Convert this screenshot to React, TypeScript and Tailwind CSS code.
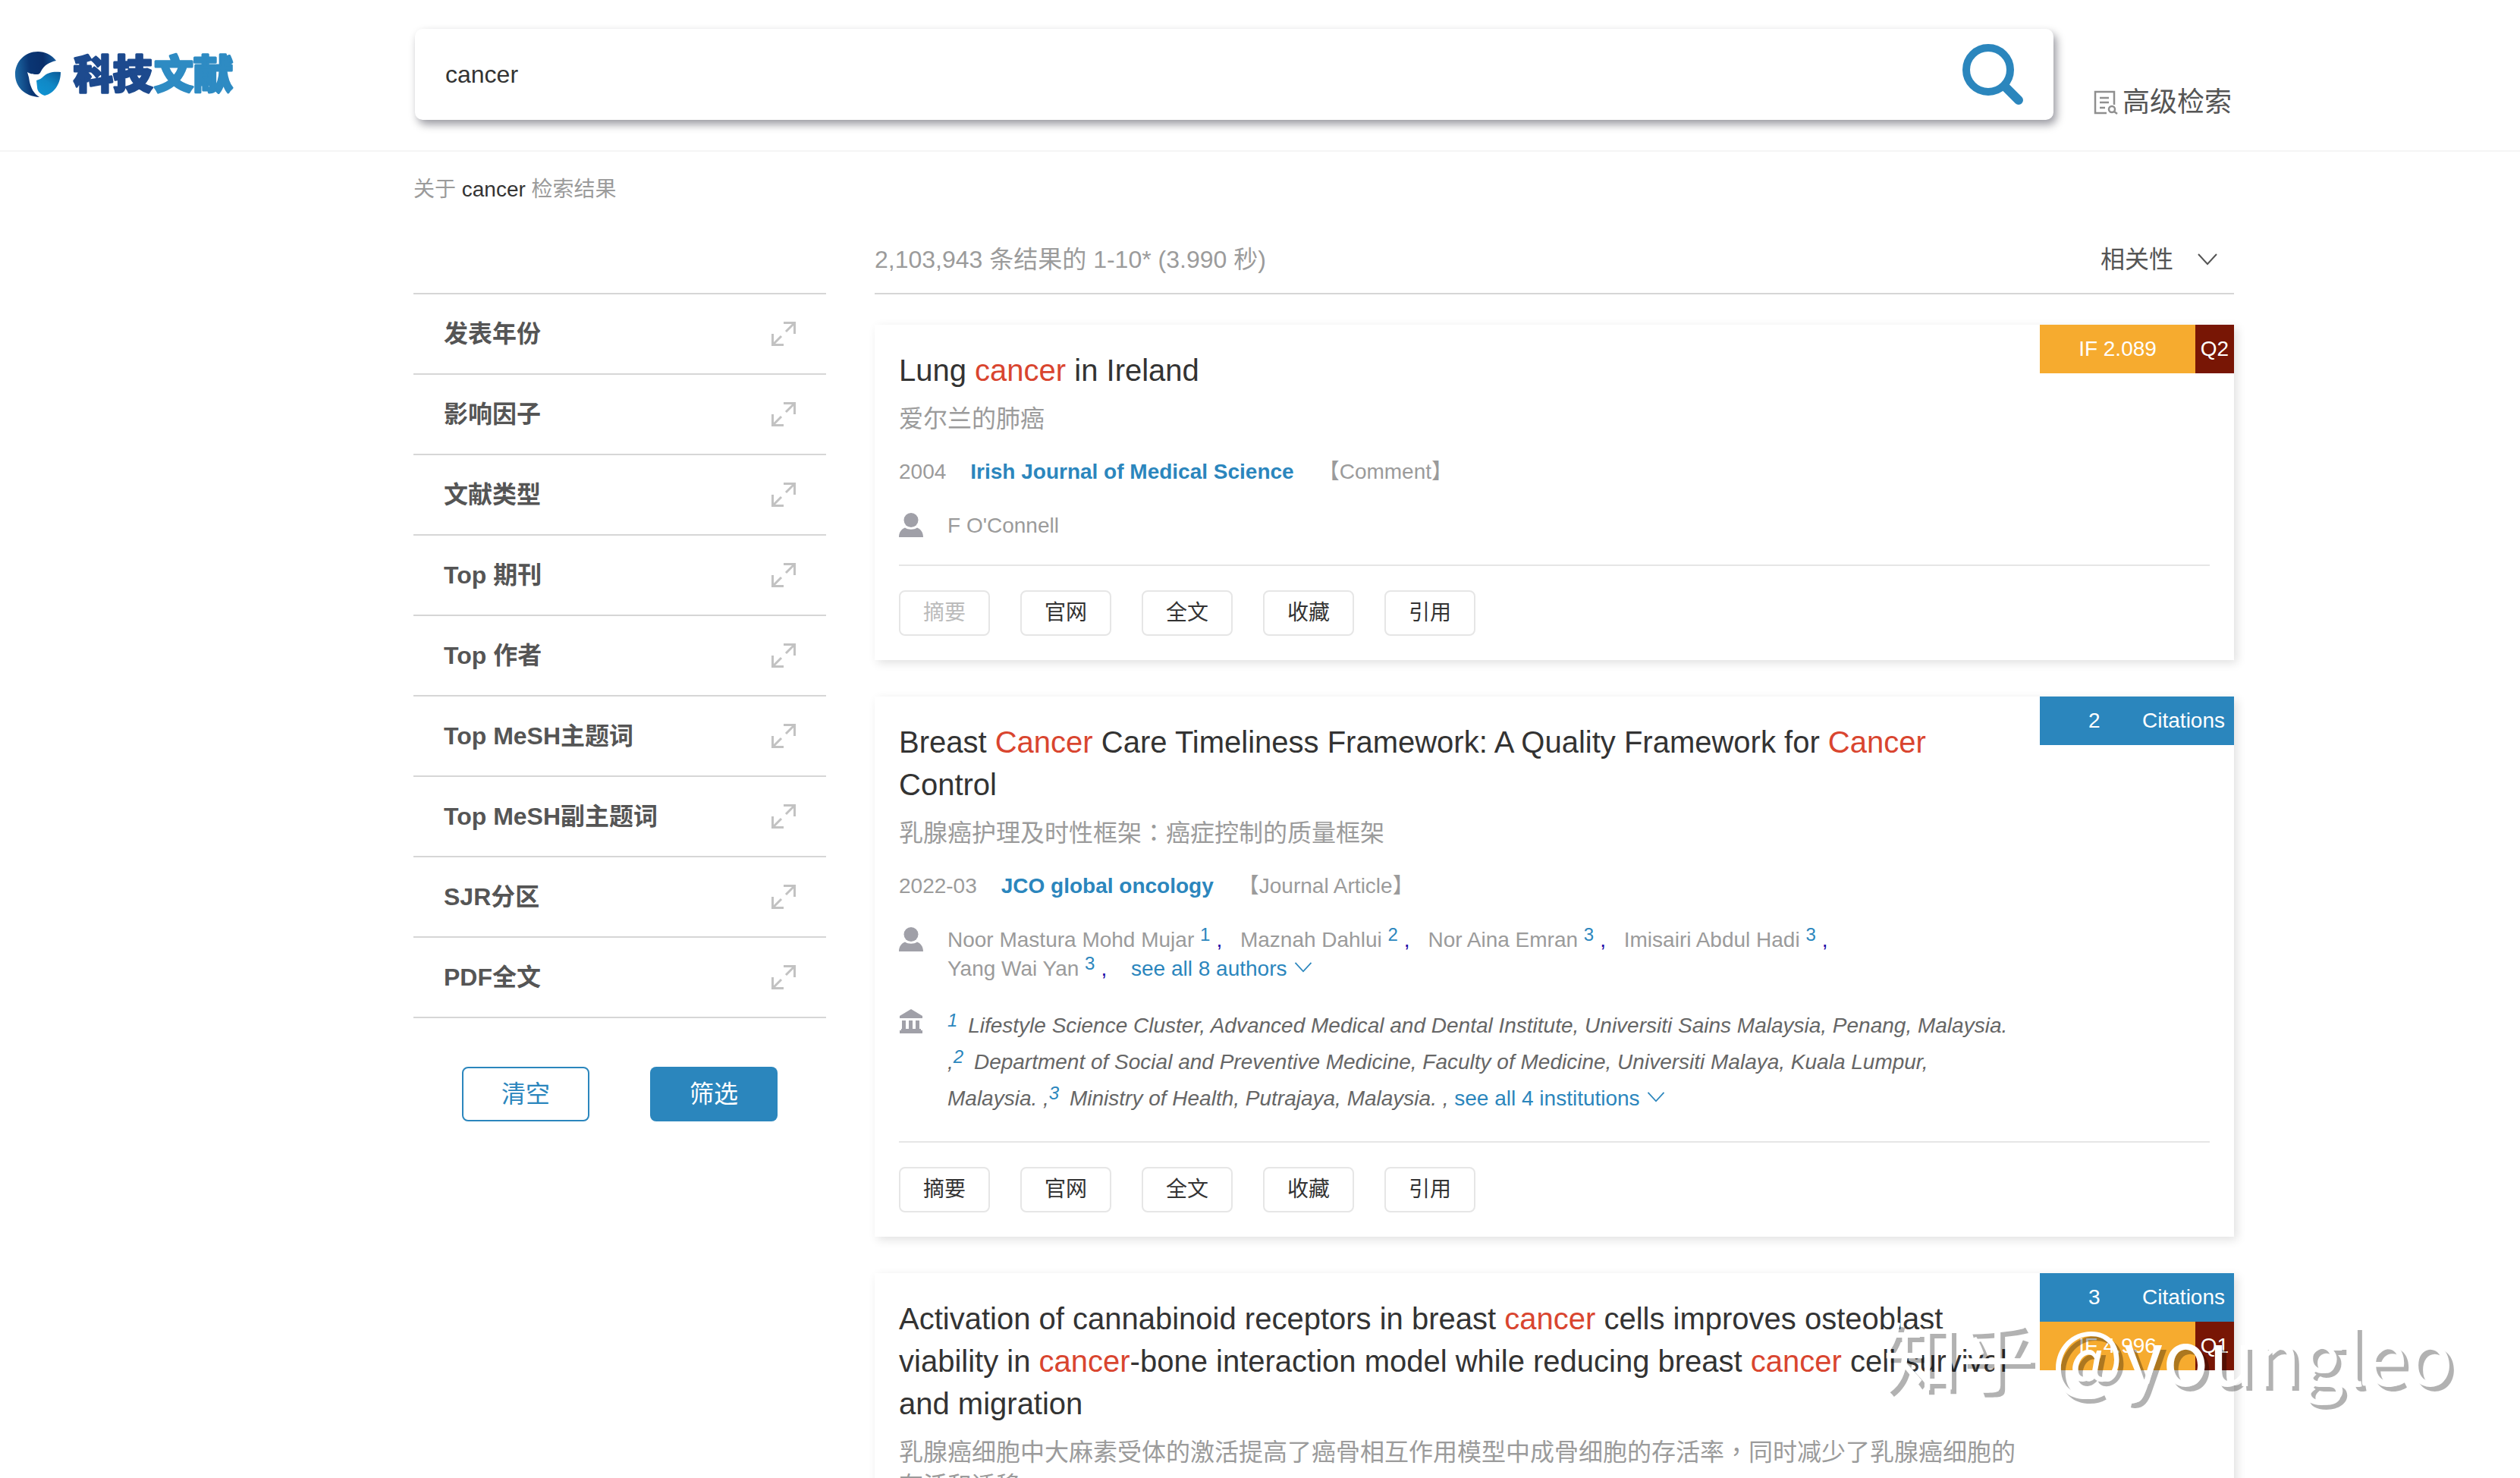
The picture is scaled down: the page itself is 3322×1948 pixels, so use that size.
import React from "react";

const filters = [
  "发表年份",
  "影响因子",
  "文献类型",
  "Top 期刊",
  "Top 作者",
  "Top MeSH主题词",
  "Top MeSH副主题词",
  "SJR分区",
  "PDF全文",
];

const Hit = ({ children }: { children: React.ReactNode }) => (
  <span className="text-[#d9452f]">{children}</span>
);

/* Full-width punctuation set in the centre of its cell */
const Mid = ({ children }: { children: React.ReactNode }) => (
  <span lang="zh-TW" className="font-['Noto_Sans_CJK_TC',sans-serif] leading-none">{children}</span>
);

const LogoMark = () => (
  <svg viewBox="0 0 60 60" className="size-[60px] shrink-0" aria-hidden="true">
    <defs>
      <linearGradient id="arc" x1="0" y1="0.4" x2="1" y2="0.3">
        <stop offset="0" stopColor="#1d6aa6" />
        <stop offset="0.35" stopColor="#0a3674" />
        <stop offset="0.7" stopColor="#0a2f6b" />
        <stop offset="1" stopColor="#14589a" />
      </linearGradient>
      <linearGradient id="leaf" x1="0.2" y1="1" x2="0.9" y2="0">
        <stop offset="0" stopColor="#0f93d2" />
        <stop offset="0.5" stopColor="#1088c6" />
        <stop offset="1" stopColor="#0b5c9a" />
      </linearGradient>
    </defs>
    <path d="M54 12C48 4 39 0 30 0C13 0 0 13 0 30C0 46 12 59 32 60C24 55 21 48 19 40L18 34L16 27C21 30 25 30 29 30C32 30 33 28 34 26C38 18 45 14 54 12Z" fill="url(#arc)" />
    <path d="M60 27C60 42 52 55 39 58C33 56 29 52 29 47L28 38C32 37 35 35 37 33C43 27 51 26 60 27Z" fill="url(#leaf)" />
  </svg>
);

/* Rounded bubble lettering beside the mark */
const LogoWords = () => (
  <svg
    viewBox="0 0 216 80"
    className="h-20 w-[216px] shrink-0 font-['Noto_Sans_CJK_SC',sans-serif] text-[52px] font-black"
    strokeWidth="3"
    strokeLinejoin="round"
  >
    <text x="1" y="59" fill="#1d4a8e" stroke="#1d4a8e">科技</text>
    <text x="107" y="59" fill="#2e8bc3" stroke="#2e8bc3">文献</text>
  </svg>
);

const SearchIcon = () => (
  <svg viewBox="0 0 80 80" className="size-20" fill="none" stroke="#2b86bd" aria-hidden="true">
    <circle cx="34" cy="34" r="29" strokeWidth="10" />
    <path d="M56 56L74 74" strokeWidth="12" strokeLinecap="round" />
  </svg>
);

const AdvancedIcon = () => (
  <svg viewBox="0 0 32 32" className="size-8" fill="none" stroke="#8f8f8f" strokeWidth="2.5" aria-hidden="true">
    <path d="M17 30H2V2H27V19" />
    <path d="M8 10H20M8 16H20M8 23H15" />
    <circle cx="24" cy="25" r="4" />
    <path d="M27 28L31 31" />
  </svg>
);

const ExpandIcon = () => (
  <svg viewBox="0 0 32 32" className="size-8" fill="none" stroke="#c2c2c2" strokeWidth="3" aria-hidden="true">
    <path d="M16 1.500H30.500V16M29 3L19 13M1.500 16V30.500H16M3 29L13 19" />
  </svg>
);

const Chevron = ({ className }: { className: string }) => (
  <svg viewBox="0 0 26 16" className={className} fill="none" stroke="currentColor" strokeWidth="2" aria-hidden="true">
    <path d="M1 1L13 14L25 1" />
  </svg>
);

const PersonIcon = () => (
  <svg viewBox="0 0 32 32" className="mt-0.5 size-8 shrink-0" fill="#a0a0a8" aria-hidden="true">
    <ellipse cx="16" cy="9.5" rx="9.5" ry="9.5" />
    <path d="M0 32C0 25 4 21 8 19.500C12 22.500 20 22.500 24 19.500C28 21 32 25 32 32Z" />
  </svg>
);

const InstitutionIcon = () => (
  <svg viewBox="0 0 32 32" className="mt-0.5 size-8 shrink-0" fill="#a0a0a8" aria-hidden="true">
    <path d="M16 0L31 9V12H1V9Z" />
    <path d="M4 15H9V26H4ZM13 15H18V26H13ZM22 15H27V26H22Z" />
    <path d="M3 26H29V28H31V32H1V28H3Z" />
  </svg>
);

const Sup = ({ children }: { children: React.ReactNode }) => (
  <a href="#ref" className="relative -top-2 text-[24px] leading-none text-[#2b86bd]">{children}</a>
);

const Author = ({ name, n }: { name: string; n: string }) => (
  <>
    {name} <Sup>{n}</Sup>
    <span className="mr-4 ml-2 text-[#1f0fa8]">,</span>{" "}
  </>
);

const Institution = ({ n, children }: { n: string; children: React.ReactNode }) => (
  <>
    <Sup>{n}</Sup>
    <span className="ml-1.5"> {children}</span>
  </>
);

const SeeAll = ({ children }: { children: React.ReactNode }) => (
  <button type="button" className="text-[#2b86bd] not-italic">
    {children} <Chevron className="mb-1 ml-0.5 inline h-[14px] w-6 align-baseline" />
  </button>
);

function Actions({ noAbstract = false }: { noAbstract?: boolean }) {
  return (
    <div className="mt-8 flex gap-10 border-t-2 border-[#e6e6e6] pt-8">
      {["摘要", "官网", "全文", "收藏", "引用"].map((label, i) => (
        <button
          key={label}
          type="button"
          disabled={noAbstract && i === 0}
          className="h-[60px] w-[120px] rounded-lg border-2 border-[#e6e6e6] text-[28px] leading-none text-[#333] disabled:text-[#bbb]"
        >
          {label}
        </button>
      ))}
    </div>
  );
}

const Citations = ({ count }: { count: number }) => (
  <div className="flex h-16 items-center justify-between bg-[#2b86bd] pr-3 pl-16">
    <span>{count}</span>
    <span>Citations</span>
  </div>
);

const Impact = ({ value, q }: { value: string; q: string }) => (
  <div className="flex h-16 text-center leading-[64px]">
    <span className="flex-1 bg-[#f6ab2f]">IF {value}</span>
    <span className="w-[51px] bg-[#781605]">{q}</span>
  </div>
);

function Card({ title, subtitle, badges, children }: {
  title: React.ReactNode;
  subtitle: React.ReactNode;
  badges: React.ReactNode;
  children: React.ReactNode;
}) {
  return (
    <article className="relative bg-white px-8 py-8 shadow-[4px_4px_12px_rgba(0,0,0,0.12)]">
      <div className="absolute top-0 right-0 w-64 text-[28px] text-white">{badges}</div>
      <h2 className="pr-[248px] text-[40px] leading-[56px] text-[#333]">{title}</h2>
      <p className="mt-3.5 pr-[248px] text-[32px] leading-[44px] text-[#9b9b9b]">{subtitle}</p>
      {children}
    </article>
  );
}

const Meta = ({ date, journal, kind }: { date: string; journal: string; kind: string }) => (
  <p className="mt-7 flex gap-8 text-[28px] leading-10 text-[#9b9b9b]">
    <span>{date}</span>
    <a href="#journal" className="font-bold text-[#2b86bd]">{journal}</a>
    <span>【{kind}】</span>
  </p>
);

export default function App() {
  return (
    <div className="relative h-screen overflow-hidden bg-white font-['Liberation_Sans','Noto_Sans_CJK_SC',sans-serif] text-[#333]">
      <header className="flex h-[200px] border-b-2 border-[#f5f5f5] pr-[380px]">
        <a href="#home" className="flex w-[547px] shrink-0 items-center gap-4 self-start pt-[58px] pl-5" aria-label="科技文献">
          <LogoMark />
          <LogoWords />
        </a>
        <form className="mt-[38px] flex h-[120px] flex-1 items-center rounded-[10px] bg-white pr-10 pl-10 shadow-[4px_6px_12px_rgba(0,0,20,0.4)]">
          <input aria-label="检索" defaultValue="cancer" className="min-w-0 flex-1 text-[32px] outline-none" />
          <button type="button" aria-label="搜索">
            <SearchIcon />
          </button>
        </form>
        <a href="#advanced" className="mt-[111px] ml-[53px] flex h-12 items-center gap-1.5 text-[36px] leading-[48px] text-[#555]">
          <AdvancedIcon />
          高级检索
        </a>
      </header>

      <main className="pr-[377px] pl-[545px]">
        <p className="pt-[30px] text-[28px] leading-10 text-[#9b9b9b]">
          关于 <span className="text-[#333]">cancer</span> 检索结果
        </p>

        <div className="mt-10 flex items-start gap-16">
          <aside className="mt-[76px] w-[544px] shrink-0">
            <ul className="border-t-2 border-[#d6d6d6]">
              {filters.map((f) => (
                <li key={f} className="border-b-2 border-[#d6d6d6]">
                  <button type="button" className="flex h-[104px] w-full items-center justify-between px-10 text-[32px] font-bold text-[#555]">
                    {f}
                    <ExpandIcon />
                  </button>
                </li>
              ))}
            </ul>
            <div className="mt-16 flex justify-center gap-20">
              <button type="button" className="h-[72px] w-[168px] rounded-lg border-2 border-[#2b86bd] text-[32px] leading-none text-[#2b86bd]">清空</button>
              <button type="button" className="h-[72px] w-[168px] rounded-lg bg-[#2b86bd] text-[32px] leading-none text-white">筛选</button>
            </div>
          </aside>

          <section className="min-w-0 flex-1">
            <div className="flex h-[78px] items-center justify-between border-b-2 border-[#d6d6d6] pr-[22px] pb-3 text-[32px] leading-10 text-[#9b9b9b]">
              <p>2,103,943 条结果的 1-10* (3.990 秒)</p>
              <button type="button" className="flex items-center gap-8 text-[#555]">
                相关性
                <Chevron className="h-4 w-[26px]" />
              </button>
            </div>

            <div className="mt-10 flex flex-col gap-12">
              <Card
                title={<>Lung <Hit>cancer</Hit> in Ireland</>}
                subtitle="爱尔兰的肺癌"
                badges={<Impact value="2.089" q="Q2" />}
              >
                <Meta date="2004" journal="Irish Journal of Medical Science" kind="Comment" />
                <div className="mt-8 flex gap-8 text-[28px] leading-[38px] text-[#9b9b9b]">
                  <PersonIcon />
                  <p>F O'Connell</p>
                </div>
                <Actions noAbstract />
              </Card>

              <Card
                title={<>Breast <Hit>Cancer</Hit> Care Timeliness Framework: A Quality Framework for <Hit>Cancer</Hit> Control</>}
                subtitle={<>乳腺癌护理及时性框架<Mid>：</Mid>癌症控制的质量框架</>}
                badges={<Citations count={2} />}
              >
                <Meta date="2022-03" journal="JCO global oncology" kind="Journal Article" />
                <div className="mt-8 flex gap-8 text-[28px] leading-[38px] text-[#9b9b9b]">
                  <PersonIcon />
                  <p>
                    <Author name="Noor Mastura Mohd Mujar" n="1" />
                    <Author name="Maznah Dahlui" n="2" />
                    <Author name="Nor Aina Emran" n="3" />
                    <Author name="Imisairi Abdul Hadi" n="3" />
                    <br />
                    <Author name="Yang Wai Yan" n="3" />
                    <span className="ml-2">
                      <SeeAll>see all 8 authors</SeeAll>
                    </span>
                  </p>
                </div>
                <div className="mt-8 flex gap-8 text-[28px] leading-[48px] text-[#666] italic">
                  <InstitutionIcon />
                  <p>
                    <Institution n="1">Lifestyle Science Cluster, Advanced Medical and Dental Institute, Universiti Sains Malaysia, Penang, Malaysia.</Institution>
                    <br />
                    ,<Institution n="2">Department of Social and Preventive Medicine, Faculty of Medicine, Universiti Malaya, Kuala Lumpur,</Institution>
                    <br />
                    Malaysia. ,<Institution n="3">Ministry of Health, Putrajaya, Malaysia. ,</Institution> <SeeAll>see all 4 institutions</SeeAll>
                  </p>
                </div>
                <Actions />
              </Card>

              <Card
                title={<>Activation of cannabinoid receptors in breast <Hit>cancer</Hit> cells improves osteoblast viability in <Hit>cancer</Hit>-bone interaction model while reducing breast <Hit>cancer</Hit> cell survival and migration</>}
                subtitle={<>乳腺癌细胞中大麻素受体的激活提高了癌骨相互作用模型中成骨细胞的存活率<Mid>，</Mid>同时减少了乳腺癌细胞的存活和迁移</>}
                badges={<><Citations count={3} /><Impact value="4.996" q="Q1" /></>}
              >
                <Actions />
              </Card>
            </div>
          </section>
        </div>
      </main>

      <div className="pointer-events-none absolute right-[88px] bottom-[94px] font-['Noto_Sans_CJK_SC',sans-serif] text-[100px] leading-[140px] whitespace-nowrap text-white [text-shadow:6px_6px_0_rgba(0,0,0,0.3)]">
        知乎 @youngleo
      </div>
    </div>
  );
}
